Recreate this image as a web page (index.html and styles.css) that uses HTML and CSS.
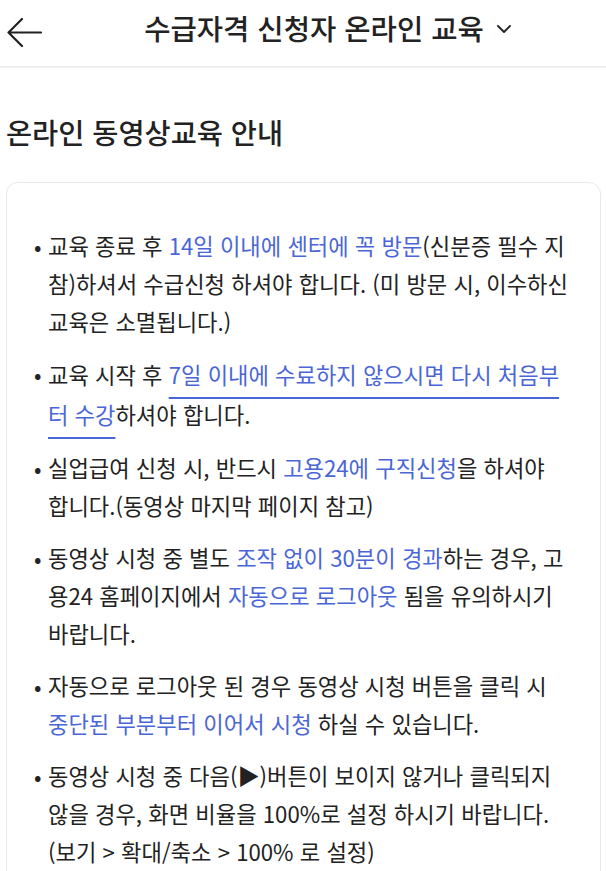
FILE: index.html
```html
<!DOCTYPE html>
<html lang="ko">
<head>
<meta charset="utf-8">
<title>수급자격 신청자 온라인 교육</title>
<link rel="stylesheet" href="styles.css">
</head>
<body>
<header class="topbar">
  <button class="back" aria-label="뒤로">
    <svg width="36" height="34" viewBox="0 0 36 34"><path d="M35 16.5H3 M16 3L2.5 16.5L16 30" fill="none" stroke="#222" stroke-width="2.2" stroke-linecap="round" stroke-linejoin="round"/></svg>
  </button>
  <div class="title-wrap">
    <h1 class="title">수급자격 신청자 온라인 교육</h1>
    <svg class="chev" width="16" height="10" viewBox="0 0 16 10"><path d="M2 2L8 8L14 2" fill="none" stroke="#222" stroke-width="1.8" stroke-linecap="round" stroke-linejoin="round"/></svg>
  </div>
</header>
<main class="content">
  <h2 class="section-title">온라인 동영상교육 안내</h2>
  <div class="card">
    <ul class="notes">
      <li><span class="dot">•</span><p>교육 종료 후 <span class="hl">14일 이내에 센터에 꼭 방문</span>(신분증 필수 지<br>참)하셔서 수급신청 하셔야 합니다. (미 방문 시, 이수하신<br>교육은 소멸됩니다.)</p></li>
      <li class="tall"><span class="dot">•</span><p>교육 시작 후 <span class="hl ul">7일 이내에 수료하지 않으시면 다시 처음부<br>터 수강</span>하셔야 합니다.</p></li>
      <li><span class="dot">•</span><p>실업급여 신청 시, 반드시 <span class="hl">고용24에 구직신청</span>을 하셔야<br>합니다.(동영상 마지막 페이지 참고)</p></li>
      <li><span class="dot">•</span><p>동영상 시청 중 별도 <span class="hl">조작 없이 30분이 경과</span>하는 경우, 고<br>용24 홈페이지에서 <span class="hl">자동으로 로그아웃</span> 됨을 유의하시기<br>바랍니다.</p></li>
      <li><span class="dot">•</span><p>자동으로 로그아웃 된 경우 동영상 시청 버튼을 클릭 시<br><span class="hl">중단된 부분부터 이어서 시청</span> 하실 수 있습니다.</p></li>
      <li><span class="dot">•</span><p>동영상 시청 중 다음(▶)버튼이 보이지 않거나 클릭되지<br>않을 경우, 화면 비율을 100%로 설정 하시기 바랍니다.<br>(보기 &gt; 확대/축소 &gt; 100% 로 설정)</p></li>
    </ul>
  </div>
</main>
</body>
</html>
```
FILE: styles.css
```css
* { box-sizing: border-box; }
html, body { margin: 0; padding: 0; background: #fff; }
body {
  font-family: "Noto Sans CJK KR", "Noto Sans", sans-serif;
  color: #222;
  overflow: hidden;
}
.topbar {
  height: 68px;
  display: flex;
  align-items: center;
  border-bottom: 2px solid #efefef;
}
.back {
  width: 52px;
  height: 60px;
  padding: 0 0 0 6px;
  margin: 0;
  border: none;
  background: none;
  display: flex;
  align-items: center;
}
.title-wrap {
  flex: 1;
  display: flex;
  align-items: center;
  justify-content: center;
  gap: 12px;
  padding-right: 2px;
  padding-bottom: 10px;
}
.title {
  margin: 0;
  font-size: 28.6px;
  font-weight: 500;
  line-height: 38px;
}
.chev { margin-top: 2px; }
.content { padding: 0 5px 0 6px; }
.section-title {
  margin: 44px 0 30px;
  font-size: 28.4px;
  font-weight: 500;
  line-height: 40px;
}
.card {
  border: 1px solid #e9e9e9;
  border-radius: 12px;
  padding: 43px 8px 40px 27px;
}
.notes {
  list-style: none;
  margin: 0;
  padding: 0;
}
.notes li {
  display: flex;
  align-items: flex-start;
  margin-bottom: 14px;
}
.notes li.tall p { line-height: 40px; }
.dot {
  width: 14px;
  flex: none;
  font-size: 22px;
  line-height: 38px;
}
.notes p {
  margin: 0;
  font-size: 22.2px;
  line-height: 38px;
  white-space: nowrap;
}
.hl { color: #4a66d6; }
.ul {
  text-decoration: underline;
  text-decoration-thickness: 2px;
  text-underline-offset: 13px;
}
```
